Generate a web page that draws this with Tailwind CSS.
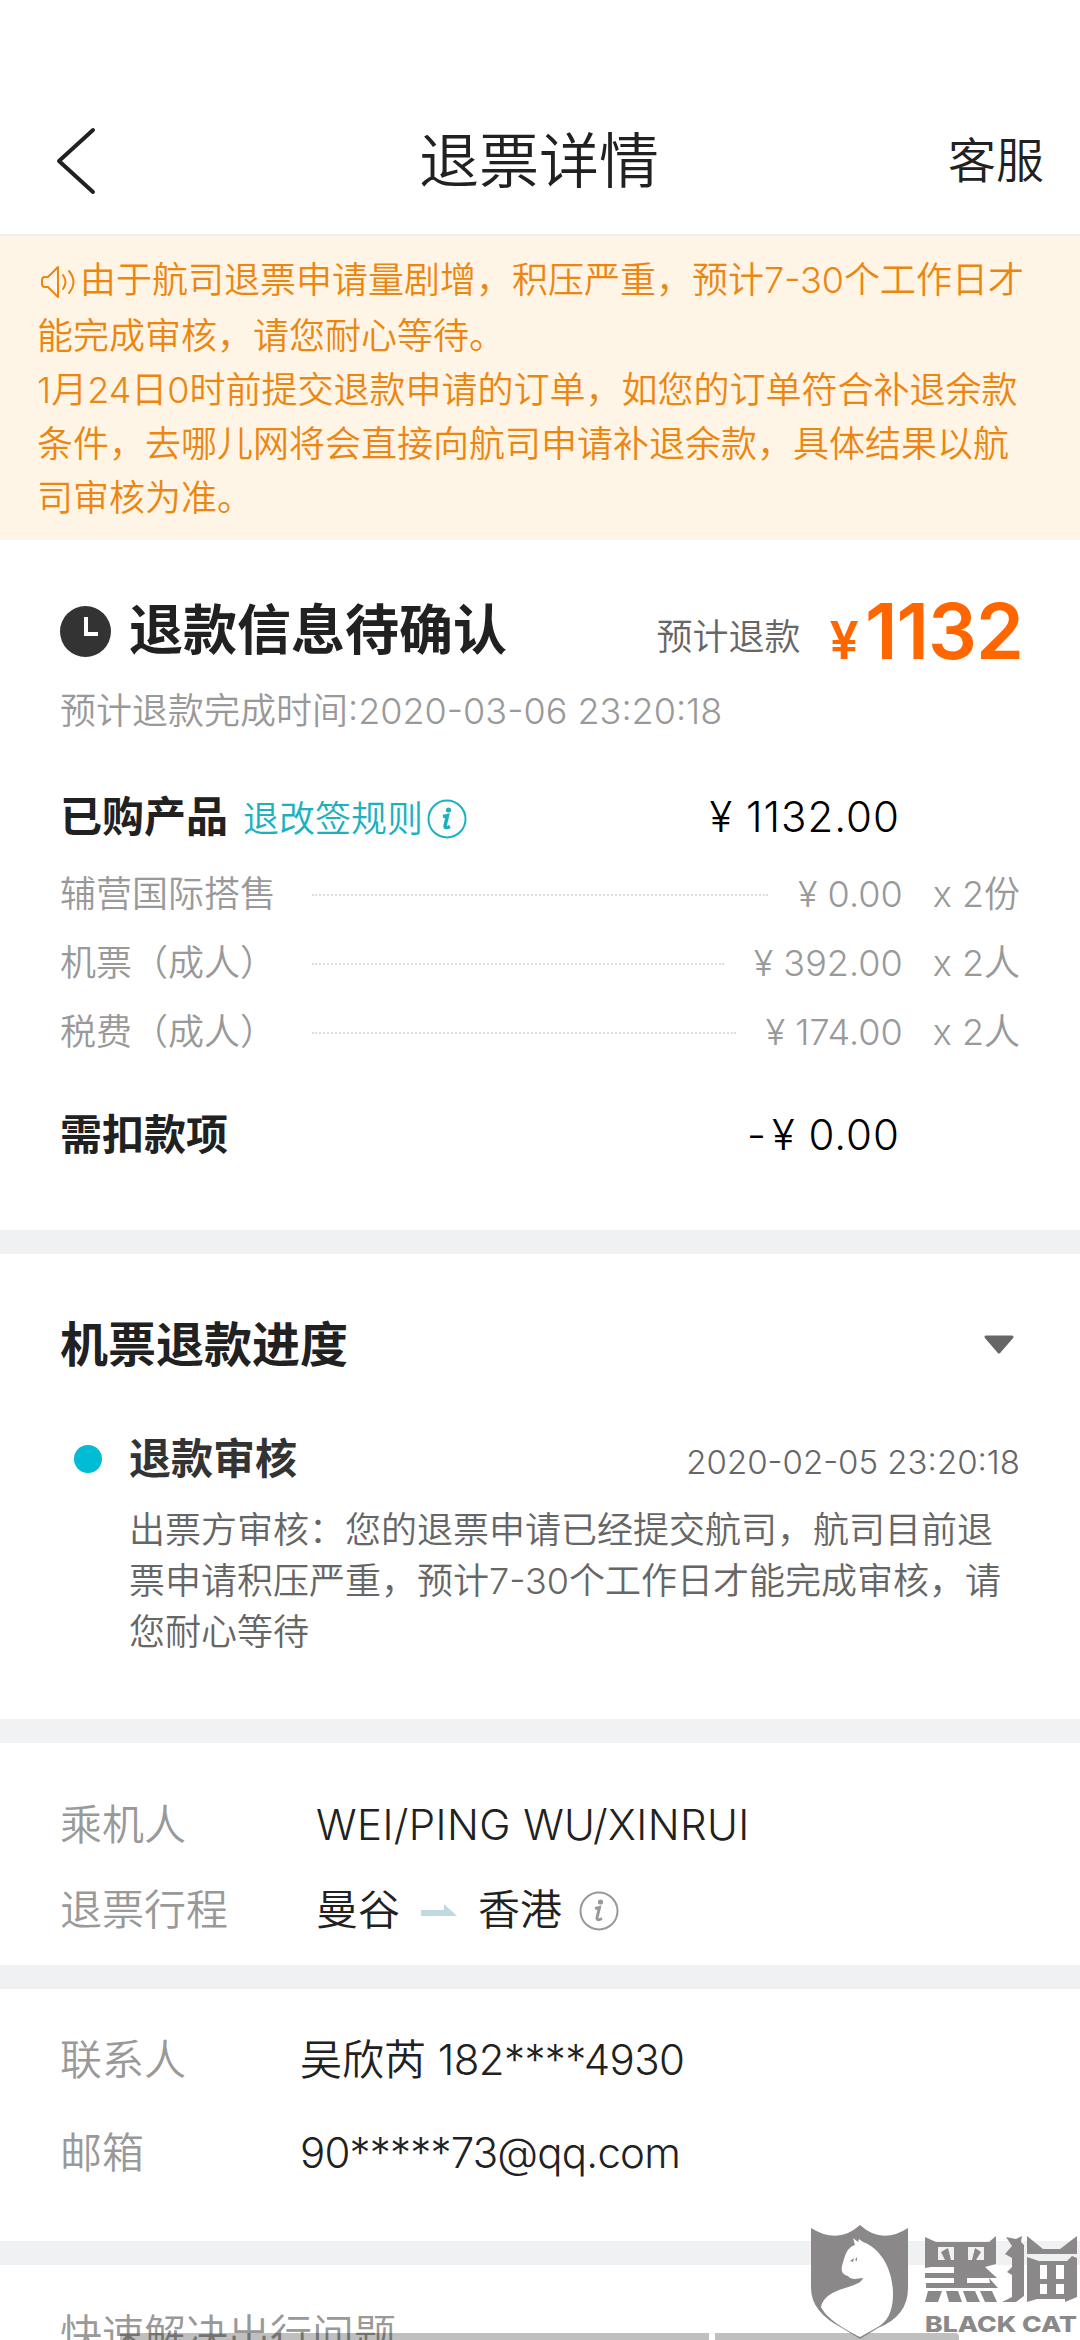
<!DOCTYPE html>
<html lang="zh-CN">
<head>
<meta charset="utf-8">
<title>退票详情</title>
<script src="https://cdn.jsdelivr.net/npm/@tailwindcss/browser@4"></script>
</head>
<body class="bg-white">
<div class="relative w-[1080px] h-[2340px] overflow-hidden bg-white font-['Inter','Noto_Sans_CJK_SC',sans-serif] font-[350] text-[#212121] text-[42px] whitespace-nowrap">

  <header class="h-[236px] pt-[88px] pl-[56px] pr-[36px] border-b-2 border-[#eeeeee] grid grid-cols-[363px_auto_1fr] items-center">
    <svg class="w-[40px] h-[68px]" viewBox="0 0 40 68" fill="none" stroke="#212121" stroke-width="4" stroke-linecap="round" stroke-linejoin="round"><path d="M37 3L3 34L37 65"/></svg>
    <h1 class="text-[60px] leading-none">退票详情</h1>
    <span class="text-[48px] leading-none justify-self-end">客服</span>
  </header>

  <section class="h-[304px] bg-[#fff5e6] pt-[15px] pl-[37px] text-[36px] leading-[54px] text-[#ed8610]">
    <p class="flex items-center h-[58px]"><svg class="w-[43px] h-[36px] mt-[4px]" viewBox="0 0 43 36" fill="none" stroke="#ed8610" stroke-width="2" stroke-linecap="round" stroke-linejoin="round"><path d="M11 13H8Q5 13 5 16V20Q5 23 8 23H11L21 33V3L11 13"/><path d="M26 11Q31 18 26 25M32 7Q41 18 32 29"/></svg><span>由于航司退票申请量剧增，积压严重，预计7-30个工作日才</span></p>
    <p>能完成审核，请您耐心等待。</p>
    <p>1月24日0时前提交退款申请的订单，如您的订单符合补退余款</p>
    <p>条件，去哪儿网将会直接向航司申请补退余款，具体结果以航</p>
    <p>司审核为准。</p>
  </section>

  <section class="h-[690px] pt-[54px] px-[60px]">
    <div class="flex items-center h-[74px]">
      <svg class="w-[51px] h-[51px]" viewBox="0 0 51 51"><circle cx="25.500" cy="25.500" r="25.500" fill="#333333"/><path d="M26 11V28H38" fill="none" stroke="#fff" stroke-width="4"/></svg>
      <h2 class="ml-[18px] text-[54px] leading-none font-bold">退款信息待确认</h2>
      <span class="ml-auto text-[36px] leading-none text-[#666666] mt-[12px]">预计退款</span>
      <span class="ml-[29px] -mr-[3px] flex items-baseline font-semibold text-[#ff6600] leading-none"><span class="text-[52px]">¥</span><span class="ml-[6px] text-[77px] tracking-[-1px]">1132</span></span>
    </div>
    <p class="mt-[16px] h-[54px] leading-[54px] text-[36px] text-[#999999]">预计退款完成时间:2020-03-06 23:20:18</p>
    <div class="mt-[49px] h-[60px] flex items-center pr-[120px]">
      <h3 class="font-bold leading-none">已购产品</h3>
      <span class="ml-[15px] mt-[4px] text-[36px] leading-none text-[#1bb1bf]">退改签规则</span>
      <svg class="ml-[4px] mt-[4px] w-[40px] h-[40px]" viewBox="0 0 40 40"><circle cx="20" cy="20" r="18.500" fill="none" stroke="#1bb1bf" stroke-width="2"/><circle cx="21.500" cy="11" r="2.600" fill="#1bb1bf"/><path d="M16 17.500L20.500 16.500L18 27Q18 30 23 27.500" fill="none" stroke="#1bb1bf" stroke-width="3.500"/></svg>
      <span class="ml-auto text-black leading-none tracking-[1px]">¥ 1132.00</span>
    </div>
    <div class="mt-[13px] text-[36px] leading-[69px] text-[#999999]">
      <div class="flex items-center h-[69px]"><span class="w-[252px]">辅营国际搭售</span><i class="flex-1 border-t-2 border-dotted border-[#dddddd]"></i><span class="ml-[30px]">¥ 0.00</span><span class="ml-[30px]">x 2份</span></div>
      <div class="flex items-center h-[69px]"><span class="w-[252px]">机票（成人）</span><i class="flex-1 border-t-2 border-dotted border-[#dddddd]"></i><span class="ml-[30px]">¥ 392.00</span><span class="ml-[30px]">x 2人</span></div>
      <div class="flex items-center h-[69px]"><span class="w-[252px]">税费（成人）</span><i class="flex-1 border-t-2 border-dotted border-[#dddddd]"></i><span class="ml-[30px]">¥ 174.00</span><span class="ml-[30px]">x 2人</span></div>
    </div>
    <div class="mt-[38px] h-[60px] flex items-center justify-between pr-[120px] leading-none">
      <h3 class="font-bold">需扣款项</h3><span class="flex text-black tracking-[1px]"><span class="mr-[5px]">-</span>¥ 0.00</span>
    </div>
  </section>
  <div class="h-[24px] bg-[#f0f1f2]"></div>

  <section class="h-[465px] pt-[61px] px-[60px]">
    <div class="flex items-center justify-between h-[60px]">
      <h2 class="text-[48px] leading-none font-bold">机票退款进度</h2>
      <svg class="w-[32px] h-[20px] mr-[5px]" viewBox="0 0 32 20"><path d="M3 2H29L16 17Z" fill="#666666" stroke="#666666" stroke-width="3" stroke-linejoin="round"/></svg>
    </div>
    <div class="mt-[54px] flex items-center h-[60px]">
      <i class="ml-[14px] w-[28px] h-[28px] rounded-full bg-[#00bcd4]"></i>
      <h3 class="ml-[27px] font-bold leading-none text-[#333333]">退款审核</h3>
      <span class="ml-auto mt-[6px] text-[33px] leading-none text-[#666666]">2020-02-05 23:20:18</span>
    </div>
    <p class="mt-[16px] pl-[69px] text-[36px] leading-[51px] text-[#666666]">出票方审核：您的退票申请已经提交航司，航司目前退<br>票申请积压严重，预计7-30个工作日才能完成审核，请<br>您耐心等待</p>
  </section>
  <div class="h-[24px] bg-[#f0f2f3]"></div>

  <section class="h-[222px] pt-[39px] px-[60px]">
    <div class="flex items-center h-[85px]"><span class="w-[256px] text-[#999999]">乘机人</span><span class="tracking-[0.4px]">WEI/PING WU/XINRUI</span></div>
    <div class="flex items-center h-[85px]"><span class="w-[256px] text-[#999999]">退票行程</span><span>曼谷</span>
      <svg class="ml-[21px] w-[36px] h-[12px]" viewBox="0 0 36 12"><path d="M0 6H23V0L36 12H0Z" fill="#bfd9e0"/></svg>
      <span class="ml-[21px]">香港</span>
      <svg class="ml-[17px] mt-[3px] w-[40px] h-[40px]" viewBox="0 0 40 40"><circle cx="20" cy="20" r="18.500" fill="none" stroke="#999999" stroke-width="2"/><circle cx="21.500" cy="11" r="2.600" fill="#999999"/><path d="M16 17.500L20.500 16.500L18 27Q18 30 23 27.500" fill="none" stroke="#999999" stroke-width="3"/></svg>
    </div>
  </section>
  <div class="h-[24px] bg-[#f0f1f3]"></div>

  <section class="h-[252px] pt-[24px] px-[60px]">
    <div class="flex items-center h-[93px]"><span class="w-[240px] text-[#999999]">联系人</span><span>吴欣芮 <span class="tracking-[-0.6px]">182****4930</span></span></div>
    <div class="flex items-center h-[93px]"><span class="w-[240px] text-[#999999]">邮箱</span><span class="tracking-[-0.8px]">90*****73@qq.com</span></div>
  </section>
  <div class="h-[24px] bg-[#f0f1f2]"></div>

  <section class="h-[75px] pt-[40px] pl-[60px] overflow-hidden text-[#999999] leading-[60px]">快速解决出行问题</section>

  <div class="absolute left-[120px] bottom-0 w-[589px] h-[7px] bg-black/25"></div>
  <div class="absolute left-[715px] bottom-0 w-[244px] h-[7px] bg-black/25 rounded-tr"></div>

  <svg class="absolute left-[810px] top-[2224px] w-[270px] h-[116px]" viewBox="0 0 270 116">
    <path d="M1 4Q28 21 50 1Q72 21 98 4V64Q98 92 68 104L50 115L32 104Q1 88 1 64Z" fill="#8b8889"/>
    <path d="M43 14L48 18L49 15L53 18C72 25 83 47 83 70C83 88 77 99 66 104L50 113C34 105 16 94 11 83C16 62 50 65 53 54C46 55 41 56 38 52C32 50 31 47 32 42C35 32 36 24 45 21Z" fill="#fff"/>
    <path d="M40 37L44 34L43 38ZM45 36L47 33V37Z" fill="#8b8889"/>
    <g fill="#8b8889" fill-rule="evenodd">
      <path d="M115 13L126 18H179L186 12V40L175 43L187 54H157V59H180L179 54L188 64H116V59H144V54H115V49H144V43H121L115 44ZM128 23V36H144V23ZM158 23V36H174V23ZM131 28L138 24L141 36H135ZM165 24L171 28L166 36H162Z"/>
      <path d="M118 67H132L128 78H115ZM136 67H148L152 78H139ZM153 67H165L170 78H157ZM170 67H182L187 78H175Z"/>
      <path d="M196 13L206 15L212 12L211 18L214 21V72L206 78H192L202 73V51L197 48L202 43V34L195 30L202 22Z"/>
      <path d="M217 12L233 25H250L267 12V30H217ZM217 33L229 37H257L262 32L267 34V73L255 78V75H227L217 78ZM230 41V55H237V41ZM246 41V55H254V41ZM230 60V70H237V60ZM246 60V70H254V60Z"/>
    </g>
    <text x="115" y="108" textLength="152" lengthAdjust="spacingAndGlyphs" font-family="Inter, sans-serif" font-weight="800" font-size="22" fill="#8b8889">BLACK CAT</text>
  </svg>
</div>
</body>
</html>
